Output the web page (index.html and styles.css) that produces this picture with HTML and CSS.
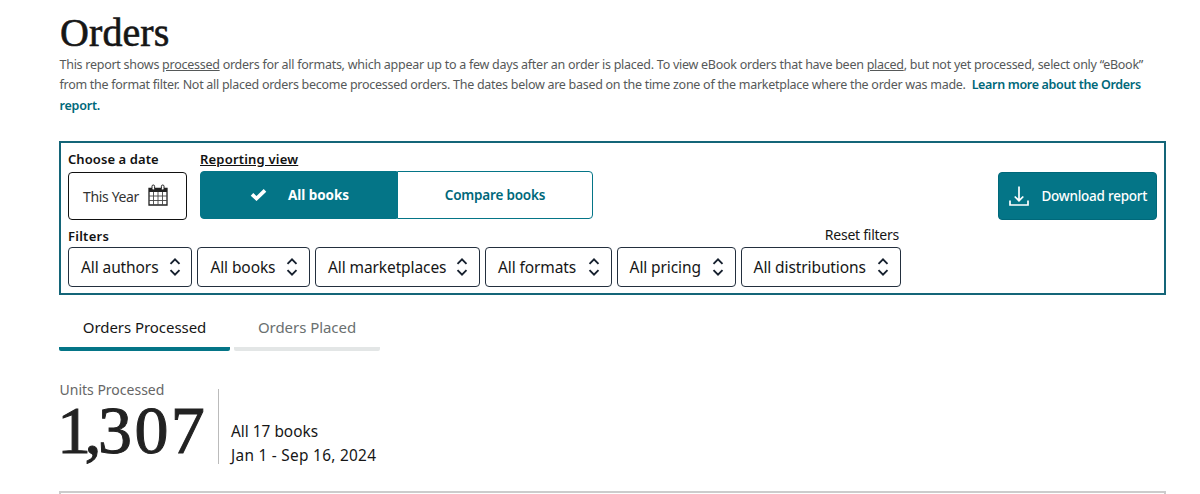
FILE: index.html
```html
<!DOCTYPE html>
<html lang="en">
<head>
<meta charset="utf-8">
<title>Orders</title>
<link rel="stylesheet" href="styles.css">
</head>
<body>
<svg class="sprite" aria-hidden="true">
  <symbol id="sort" viewBox="0 0 12 20"><path d="M1.500 6.800 6 2.300l4.500 4.500M1.500 13.200 6 17.700l4.500-4.500" fill="none" stroke="currentColor" stroke-width="1.900"/></symbol>
</svg>
<main class="page">
  <h1 class="title">Orders</h1>
  <p class="intro">
    <span class="line line-1">This report shows <u>processed</u> orders for all formats, which appear up to a few days after an order is placed. To view eBook orders that have been <u>placed</u>, but not yet processed, select only “eBook”</span>
    <span class="line line-2">from the format filter. Not all placed orders become processed orders. The dates below are based on the time zone of the marketplace where the order was made. &nbsp;<a class="learn">Learn more about the Orders</a></span>
    <a class="line learn line-3">report.</a>
  </p>

  <section class="panel">
    <div class="controls">
      <div class="date">
        <div class="label label-date">Choose a date</div>
        <button class="date-button"><span>This Year</span>
          <svg class="calendar" viewBox="0 0 20 22"><path d="M1 4.500h18v16.500H1z" fill="none" stroke="#222" stroke-width="1.300"/><path d="M1 4h18v4H1z" fill="#222"/><path d="M1 12h18M1 16.500h18M5.500 8v13M10 8v13M14.500 8v13" stroke="#444" stroke-width=".9"/><rect x="4" y="1" width="2.600" height="5" rx="1.300" fill="#fff" stroke="#222"/><rect x="13.400" y="1" width="2.600" height="5" rx="1.300" fill="#fff" stroke="#222"/></svg>
        </button>
      </div>
      <div class="view">
        <div class="label label-view"><u>Reporting view</u></div>
        <div class="segments">
          <button class="segment selected"><svg class="check" viewBox="0 0 17 13"><path d="M2 6.300 6.500 10.500 15 2.300" fill="none" stroke="#fff" stroke-width="3.700"/></svg><span>All books</span></button>
          <button class="segment compare"><span>Compare books</span></button>
        </div>
      </div>
      <button class="download"><svg class="download-icon" viewBox="0 0 20 20"><path d="M10 .5v14M5.700 10.500l4.300 4.200 4.300-4.200M1 14.500v4.500h18v-4.500" fill="none" stroke="#fff" stroke-width="1.700"/></svg><span>Download report</span></button>
    </div>
    <div class="filter-head"><span class="label label-filters">Filters</span><span class="reset">Reset filters</span></div>
    <div class="filters">
      <button class="filter authors"><span>All authors</span><svg class="sort"><use href="#sort"/></svg></button>
      <button class="filter books"><span>All books</span><svg class="sort"><use href="#sort"/></svg></button>
      <button class="filter markets"><span>All marketplaces</span><svg class="sort"><use href="#sort"/></svg></button>
      <button class="filter formats"><span>All formats</span><svg class="sort"><use href="#sort"/></svg></button>
      <button class="filter pricing"><span>All pricing</span><svg class="sort"><use href="#sort"/></svg></button>
      <button class="filter distributions"><span>All distributions</span><svg class="sort"><use href="#sort"/></svg></button>
    </div>
  </section>

  <nav class="tabs">
    <a class="tab active"><span>Orders Processed</span></a>
    <a class="tab placed"><span>Orders Placed</span></a>
  </nav>

  <section class="summary">
    <div class="units">
      <div class="units-label">Units Processed</div>
      <div class="units-value"><span class="thousands">1</span><span class="separator">,</span>307</div>
    </div>
    <div class="scope"><div class="scope-books">All 17 books</div><div class="scope-dates">Jan 1 - Sep 16, 2024</div></div>
  </section>
  <div class="chart"></div>
</main>
</body>
</html>
```
FILE: styles.css
```css
* { box-sizing: border-box; }
body { margin: 0; background: #fff; color: #161616; font-family: "Noto Sans", sans-serif; height: 494px; overflow: hidden; }
button { font: inherit; color: inherit; background: #fff; padding: 0; display: flex; align-items: center; white-space: nowrap; }
svg { display: block; flex: none; }
.sprite { width: 0; height: 0; position: absolute; }
.page { width: 1107px; margin-left: 59px; padding-top: 8px; }
.title { margin: 0; height: 47px; font: 400 40px/49px "Liberation Serif", serif; -webkit-text-stroke: .6px #161616; padding-left: 1px; letter-spacing: .1px; }
.intro { margin: 0; height: 86px; font-size: 12.500px; letter-spacing: -.265px; color: #565959; padding-left: .5px; }
.line { display: block; height: 20px; line-height: 20px; white-space: nowrap; }
.line-2 { letter-spacing: -.278px; }
.line-3 { line-height: 22px; }
.learn { color: #00687a; font-weight: 600; letter-spacing: -.33px; }
.learn.line { letter-spacing: -.2px; }
.panel { border: 2px solid #146578; height: 154px; padding: 6px 7px 0; }
.controls { display: flex; height: 77px; }
.label { font-size: 13px; font-weight: 600; line-height: 20px; color: #111; white-space: nowrap; }
.label-date { letter-spacing: .08px; }
.label-view { letter-spacing: .2px; }
.label-filters { letter-spacing: .25px; }
.date { width: 132px; }
.date-button { width: 119px; height: 48px; margin-top: 3px; border: 1px solid #111; border-radius: 4px; padding-left: 14px; font-size: 14px; letter-spacing: -.35px; color: #333; }
.date-button span { width: 65px; text-align: left; }
.calendar { width: 20px; height: 22px; position: relative; top: -1px; }
.segments { display: flex; margin-top: 2px; }
.segment { height: 48px; border: 1px solid #047587; color: #00687a; font-size: 13.500px; letter-spacing: -.2px; font-weight: 600; }
.selected { width: 197px; background: #047587; color: #fff; border-radius: 4px 0 0 4px; padding-left: 49px; gap: 21px; font-weight: 700; letter-spacing: -.05px; }
.check { width: 17px; height: 13px; position: relative; top: -1px; }
.compare { width: 196px; justify-content: center; border-radius: 0 4px 4px 0; }
.download { margin: 23px 0 0 auto; width: 159px; height: 48px; border: 1px solid #00687a; border-radius: 4px; background: #047587; color: #fff; padding-left: 10px; gap: 12.500px; font-size: 13.500px; letter-spacing: -.25px; font-weight: 500; }
.download-icon { width: 20px; height: 20px; }
.filter-head { display: flex; justify-content: space-between; width: 831px; height: 21px; line-height: 20px; }
.reset { font-size: 14px; line-height: 18px; letter-spacing: -.25px; }
.filters { display: flex; gap: 5px; }
.filter { height: 40px; border: 1px solid #232f3e; border-radius: 4px; justify-content: space-between; padding: 0 10.500px 0 12px; font-size: 15.500px; letter-spacing: -.1px; }
.sort { width: 12px; height: 20px; color: #16202e; }
.authors { width: 124.400px; }
.books { width: 112.600px; }
.markets { width: 165px; }
.formats { width: 126.600px; }
.pricing { width: 119px; }
.distributions { width: 160px; }
.tabs { display: flex; gap: 4px; height: 56px; }
.tab { height: 56px; padding-top: 20px; line-height: 24px; font-size: 15px; letter-spacing: -.05px; text-align: center; border-radius: 2px; background: linear-gradient(#047587, #047587) bottom / 100% 4px no-repeat; white-space: nowrap; }
.active { width: 171px; }
.placed { width: 146px; color: #6a7070; background-image: linear-gradient(#e3e6e6, #e3e6e6); }
.summary { display: flex; height: 140px; padding-top: 28px; }
.units { width: 160px; height: 85px; background: linear-gradient(#bbb, #bbb) right bottom / 1px 75px no-repeat; }
.units-label { font-size: 14px; line-height: 22px; color: #666; padding-left: .5px; }
.units-value { font: 68px/58px "Liberation Serif", serif; -webkit-text-stroke: 1px #222; color: #222; letter-spacing: 2.400px; margin-left: -2px; white-space: nowrap; }
.thousands { letter-spacing: -6.500px; }
.separator { letter-spacing: -3.500px; }
.scope { padding: 41px 0 0 12px; font-size: 15.400px; line-height: 24px; white-space: nowrap; }
.scope-dates { letter-spacing: .28px; }
.chart { height: 10px; border: 2px solid #ccc; border-bottom: 0; }
```
